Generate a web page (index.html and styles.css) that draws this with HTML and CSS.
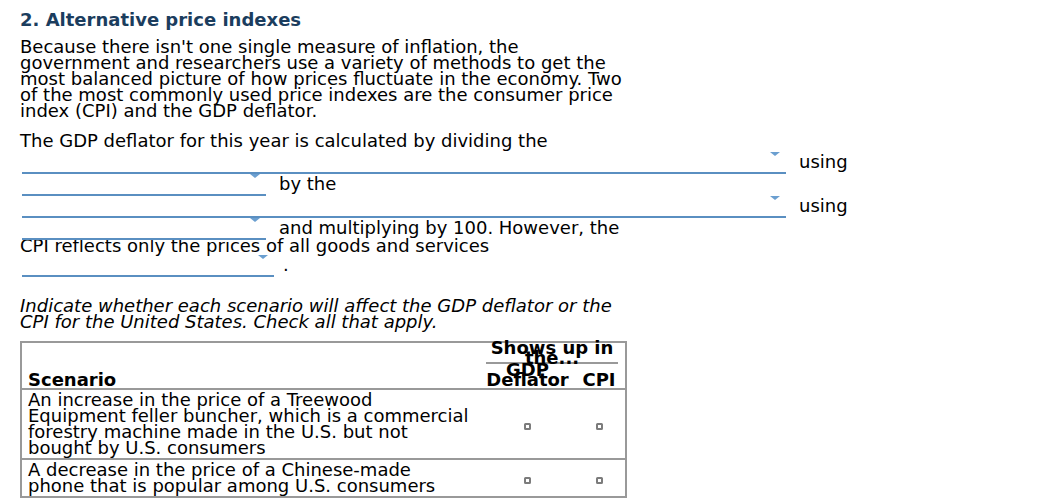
FILE: index.html
```html
<!DOCTYPE html>
<html lang="en">
<head>
<meta charset="utf-8">
<title>Alternative price indexes</title>
<link rel="stylesheet" href="styles.css">
</head>
<body>
<div class="page">
  <h2 class="title">2. Alternative price indexes</h2>
  <p class="intro">Because there isn't one single measure of inflation, the<br>government and researchers use a variety of methods to get the<br>most balanced picture of how prices fluctuate in the economy. Two<br>of the most commonly used price indexes are the consumer price<br>index (CPI) and the GDP deflator.</p>

  <div class="fill">
    <p class="fill-text">The GDP deflator for this year is calculated by dividing the</p>
    <div class="blank-row first"><span class="dropdown wide"></span><span class="after">using</span></div>
    <div class="blank-row"><span class="dropdown narrow"></span><span class="after">by the</span></div>
    <div class="blank-row"><span class="dropdown wide"></span><span class="after">using</span></div>
    <div class="blank-row"><span class="dropdown narrow"></span><span class="after">and multiplying by 100. However, the</span></div>
    <p class="fill-text tight">CPI reflects only the prices of all goods and services</p>
    <div class="blank-row last-row"><span class="dropdown short"></span><span class="after period">.</span></div>
  </div>

  <p class="instr">Indicate whether each scenario will affect the GDP deflator or the<br>CPI for the United States. Check all that apply.</p>

  <table class="grid">
    <colgroup>
      <col class="c-scen">
      <col class="c-gdp">
      <col class="c-cpi">
    </colgroup>
    <thead>
      <tr>
        <th class="h-scen" rowspan="2">Scenario</th>
        <th class="h-group" colspan="2"><div class="group-label">Shows up in<br>the...</div></th>
      </tr>
      <tr>
        <th class="h-col">GDP<br>Deflator</th>
        <th class="h-col">CPI</th>
      </tr>
    </thead>
    <tbody>
      <tr class="sep">
        <td class="scen">An increase in the price of a Treewood<br>Equipment feller buncher, which is a commercial<br>forestry machine made in the U.S. but not<br>bought by U.S. consumers</td>
        <td class="check"><span class="cb"></span></td>
        <td class="check"><span class="cb"></span></td>
      </tr>
      <tr>
        <td class="scen">A decrease in the price of a Chinese-made<br>phone that is popular among U.S. consumers</td>
        <td class="check"><span class="cb"></span></td>
        <td class="check"><span class="cb"></span></td>
      </tr>
    </tbody>
  </table>
</div>
</body>
</html>
```

FILE: styles.css
```css
html, body {
  margin: 0;
  padding: 0;
  background: #ffffff;
}

body {
  font-family: Verdana, "DejaVu Sans", sans-serif;
  font-size: 18px;
  line-height: 16px;
  color: #000000;
}

.page {
  padding: 12px 20px 0 20px;
}

.title {
  margin: 0 0 11px 0;
  font-size: 18px;
  line-height: 16px;
  font-weight: bold;
  color: #1b3d5e;
}

.intro {
  margin: 0 0 14px 0;
}

.fill-text {
  margin: 0;
  white-space: nowrap;
}

.fill-text.tight {
  margin-top: -2px;
}

.blank-row {
  display: flex;
  align-items: flex-start;
  height: 22px;
}

.blank-row.first {
  margin-top: 3px;
}

.blank-row.last-row {
  margin-top: 1px;
}

.dropdown {
  position: relative;
  display: block;
  box-sizing: border-box;
  height: 22px;
  margin-left: 2px;
  border-bottom: 2px solid #5a8fc1;
  flex: none;
}

.dropdown::after {
  content: "";
  position: absolute;
  top: 0;
  right: 6px;
  width: 0;
  height: 0;
  border-left: 5px solid transparent;
  border-right: 5px solid transparent;
  border-top: 4px solid #6b9fd0;
}

.dropdown.wide { width: 764px; }
.dropdown.narrow { width: 244px; }
.dropdown.short { width: 252px; }

.after {
  padding-top: 2px;
  margin-left: 13px;
  white-space: nowrap;
}

.after.period {
  margin-left: 9px;
}

.instr {
  margin: 21px 0 11px 0;
  font-style: italic;
}

.grid {
  width: 607px;
  table-layout: fixed;
  border-collapse: separate;
  border-spacing: 0;
  border: 2px solid #999999;
}

.c-scen { width: 460px; }
.c-gdp { width: 91px; }
.c-cpi { width: 52px; }

.grid th {
  font-weight: bold;
  line-height: 10px;
  padding: 0;
}

.h-scen {
  text-align: left;
  vertical-align: bottom;
  padding: 0 6px 3px 6px !important;
  border-bottom: 2px solid #999999;
}

.h-group {
  vertical-align: top;
  padding: 0 7px 0 4px !important;
}

.group-label {
  text-align: center;
  line-height: 9.5px;
  border-bottom: 2px solid #999999;
  white-space: nowrap;
}

.h-col {
  text-align: center;
  vertical-align: bottom;
  padding: 1px 0 3px 0 !important;
  border-bottom: 2px solid #999999;
  white-space: nowrap;
}

.grid td {
  padding: 0;
}

.scen {
  padding: 2px 6px !important;
  vertical-align: top;
  white-space: nowrap;
}

.sep td {
  border-bottom: 2px solid #999999;
}

.check {
  vertical-align: middle;
}

.cb {
  display: block;
  box-sizing: border-box;
  width: 7px;
  height: 7px;
  margin: 4px auto 0 auto;
  border: 2px solid #7c7c7c;
  border-radius: 1.5px;
  background: #ffffff;
}
```
